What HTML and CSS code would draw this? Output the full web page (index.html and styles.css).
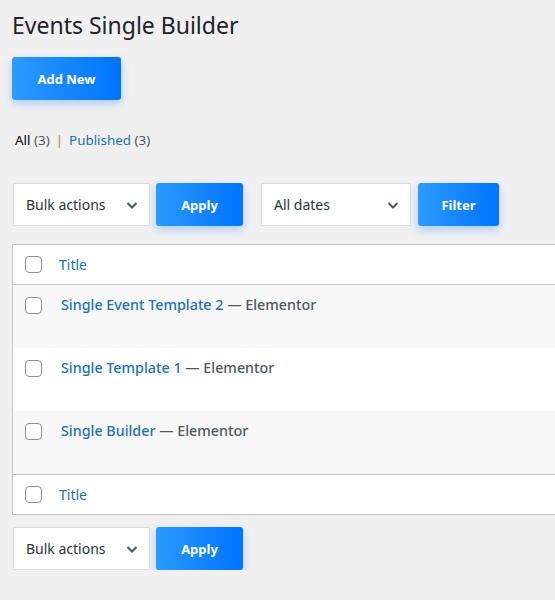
FILE: index.html
```html
<!DOCTYPE html>
<html>
<head>
<meta charset="utf-8">
<link rel="stylesheet" href="styles.css">
</head>
<body>
<div class="wrap">
  <h1 class="page-title">Events Single Builder</h1>
  <a class="btn btn-add">Add New</a>
  <ul class="subsubsub">
    <li class="current">All <span class="count">(3)</span></li>
    <li class="sep">|</li>
    <li><a>Published</a> <span class="count">(3)</span></li>
  </ul>
  <div class="tablenav top">
    <div class="select sel-bulk"><span>Bulk actions</span><svg viewBox="0 0 16 16" class="chev"><path d="M3.5 6 L8 10.5 L12.5 6" fill="none" stroke="#50575e" stroke-width="2"/></svg></div>
    <a class="btn btn-apply">Apply</a>
    <div class="select sel-dates"><span>All dates</span><svg viewBox="0 0 16 16" class="chev"><path d="M3.5 6 L8 10.5 L12.5 6" fill="none" stroke="#50575e" stroke-width="2"/></svg></div>
    <a class="btn btn-filter">Filter</a>
  </div>
  <div class="table">
    <div class="row head"><span class="cb"></span><a class="col-title">Title</a></div>
    <div class="row item alt"><span class="cb"></span><strong><a>Single Event Template 2</a> — Elementor</strong></div>
    <div class="row item"><span class="cb"></span><strong><a>Single Template 1</a> — Elementor</strong></div>
    <div class="row item alt"><span class="cb"></span><strong><a>Single Builder</a> — Elementor</strong></div>
    <div class="row foot"><span class="cb"></span><a class="col-title">Title</a></div>
  </div>
  <div class="tablenav bottom">
    <div class="select sel-bulk"><span>Bulk actions</span><svg viewBox="0 0 16 16" class="chev"><path d="M3.5 6 L8 10.5 L12.5 6" fill="none" stroke="#50575e" stroke-width="2"/></svg></div>
    <a class="btn btn-apply">Apply</a>
  </div>
</div>
</body>
</html>
```
FILE: styles.css
```css
html, body {
  margin: 0;
  padding: 0;
  background: #f0f0f1;
  overflow: hidden;
}
body {
  font-family: "Noto Sans", "Open Sans", sans-serif;
  color: #3c434a;
  font-size: 13px;
}
.wrap {
  padding: 0 0 0 12px;
}
.page-title {
  margin: 0;
  padding-top: 9px;
  font-size: 23px;
  font-weight: 400;
  line-height: 32px;
  color: #1d2327;
  height: 48px;
}
.btn {
  display: flex;
  align-items: center;
  justify-content: center;
  height: 43px;
  border-radius: 3px;
  background: linear-gradient(90deg, #2b9bff 0%, #0073ff 100%);
  color: #fff;
  font-weight: 700;
  font-size: 13px;
  box-shadow: 0 4px 10px rgba(0, 115, 255, 0.28);
  box-sizing: border-box;
}
.btn-add {
  width: 109px;
}
.subsubsub {
  list-style: none;
  margin: 28px 0 0 3px;
  padding: 0;
  display: flex;
  gap: 6px;
  font-size: 13.4px;
  line-height: 24px;
  height: 24px;
}
.subsubsub .current { color: #000; }
.subsubsub .count { color: #50575e; }
.subsubsub .sep { color: #b5833a; }
.subsubsub a { color: #2271b1; }
.tablenav {
  display: flex;
  align-items: center;
  height: 43px;
}
.tablenav.top {
  margin-top: 31px;
}
.tablenav.bottom {
  margin-top: 12px;
}
.select {
  box-sizing: border-box;
  height: 43px;
  background: #fff;
  border: 1px solid #dcdcde;
  border-radius: 2px;
  display: flex;
  align-items: center;
  justify-content: space-between;
  padding: 0 9px 0 12px;
  font-size: 14px;
  color: #2c3338;
}
.sel-bulk { width: 137px; margin-left: 1px; }
.sel-dates { width: 150px; margin-left: 18px; }
.chev { width: 16px; height: 16px; }
.btn-apply { width: 87px; margin-left: 6px; }
.btn-filter { width: 81px; margin-left: 7px; }
.table {
  margin-top: 18px;
  border: 1px solid #c3c4c7;
  border-right: none;
  background: #fff;
}
.row {
  display: flex;
  align-items: flex-start;
  box-sizing: border-box;
}
.row.head {
  height: 40px;
  border-bottom: 1px solid #c3c4c7;
  align-items: center;
}
.row.foot {
  height: 40px;
  border-top: 1px solid #c3c4c7;
  align-items: center;
}
.row.item {
  height: 63px;
  padding-top: 10px;
}
.row.alt { background: #f8f8f8; }
.cb {
  display: block;
  box-sizing: border-box;
  width: 17px;
  height: 17px;
  border: 1px solid #8c8f94;
  border-radius: 4px;
  background: #fff;
  margin-left: 12px;
  flex: none;
}
.row.item .cb { margin-top: 2px; }
.col-title {
  color: #2271b1;
  font-size: 14px;
  margin-left: 17px;
}
.row strong {
  font-weight: 500;
  font-size: 14.3px;
  margin-left: 19px;
  color: #50575e;
  line-height: 20px;
}
.row strong a { color: #2271b1; }
```
